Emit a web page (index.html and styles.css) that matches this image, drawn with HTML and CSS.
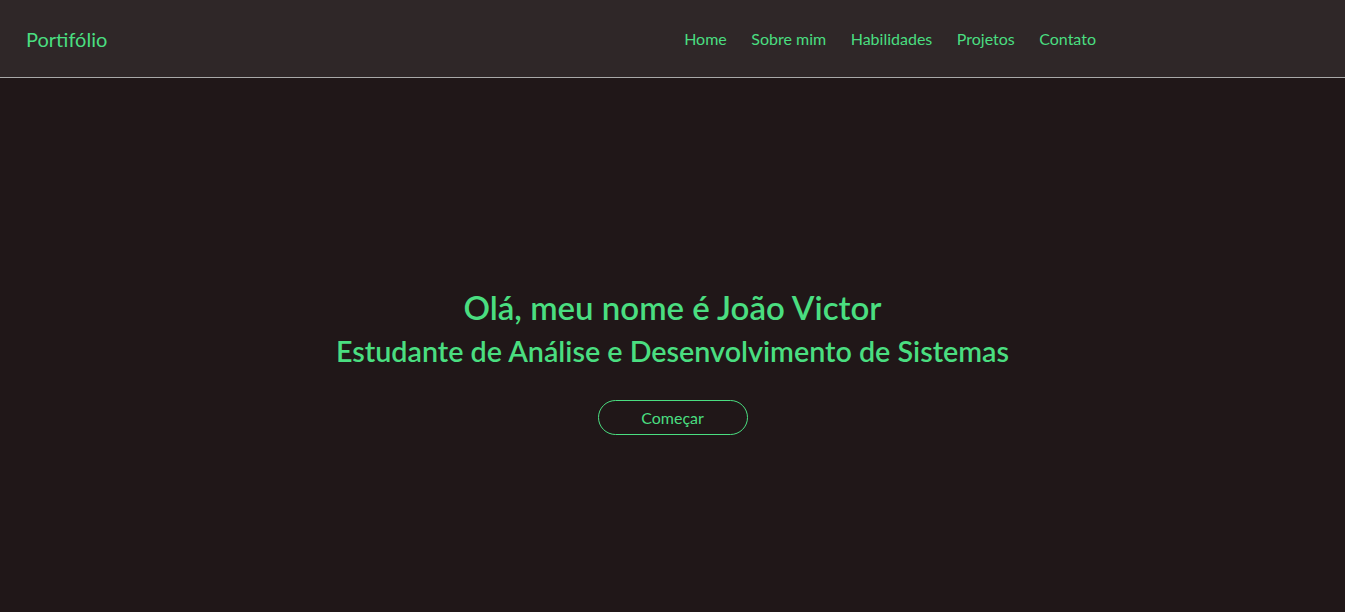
FILE: index.html
```html
<!DOCTYPE html>
<html lang="pt-BR">
<head>
  <meta charset="UTF-8" />
  <meta name="viewport" content="width=device-width, initial-scale=1" />
  <title>Portifólio</title>
  <link rel="stylesheet" href="styles.css">
</head>
<body>

  <!-- Header -->
  <header class="header">
    <a href="#" class="logo">Portifólio</a>
    <nav class="nav">
      <a href="#home">Home</a>
      <a href="#sobre">Sobre mim</a>
      <a href="#habilidades">Habilidades</a>
      <a href="#projetos">Projetos</a>
      <a href="#contato">Contato</a>
    </nav>
  </header>

  <!-- Hero -->
  <section class="hero" id="home">
    <h1>Olá, meu nome é João Victor</h1>
    <h2>Estudante de Análise e Desenvolvimento de Sistemas</h2>
    <a href="#sobre" class="btn">Começar</a>
  </section>

</body>
</html>
```

FILE: styles.css
```css
/* Reset & General */
body, html {
  margin: 0;
  padding: 0;
  font-family: 'Segoe UI', Lato, sans-serif;
  background: #201718;
  color: #4ade80;
  height: 100%;
  overflow: hidden;
}

a {
  color: #4ade80;
  text-decoration: none;
}

/* Header */
.header {
  height: 77px;
  background-color: #2f2728;
  border-bottom: 1px solid #a9a9a9;
  display: flex;
  align-items: center;
  justify-content: space-between;
  padding: 0 249px 0 26px;
}

.logo {
  font-size: 20px;
}

.nav {
  display: flex;
  gap: 24.5px;
}

.nav a {
  font-size: 16px;
}

/* Hero */
.hero {
  display: flex;
  flex-direction: column;
  align-items: center;
  padding-top: 209px;
  text-align: center;
}

.hero h1 {
  margin: 0;
  font-size: 33px;
  font-weight: 600;
}

.hero h2 {
  margin: 7px 0 0;
  font-size: 28.7px;
  font-weight: 600;
}

.btn {
  margin-top: 32px;
  width: 148px;
  height: 33px;
  line-height: 33px;
  border: 1px solid #4ade80;
  border-radius: 18px;
  font-size: 16px;
}
```
